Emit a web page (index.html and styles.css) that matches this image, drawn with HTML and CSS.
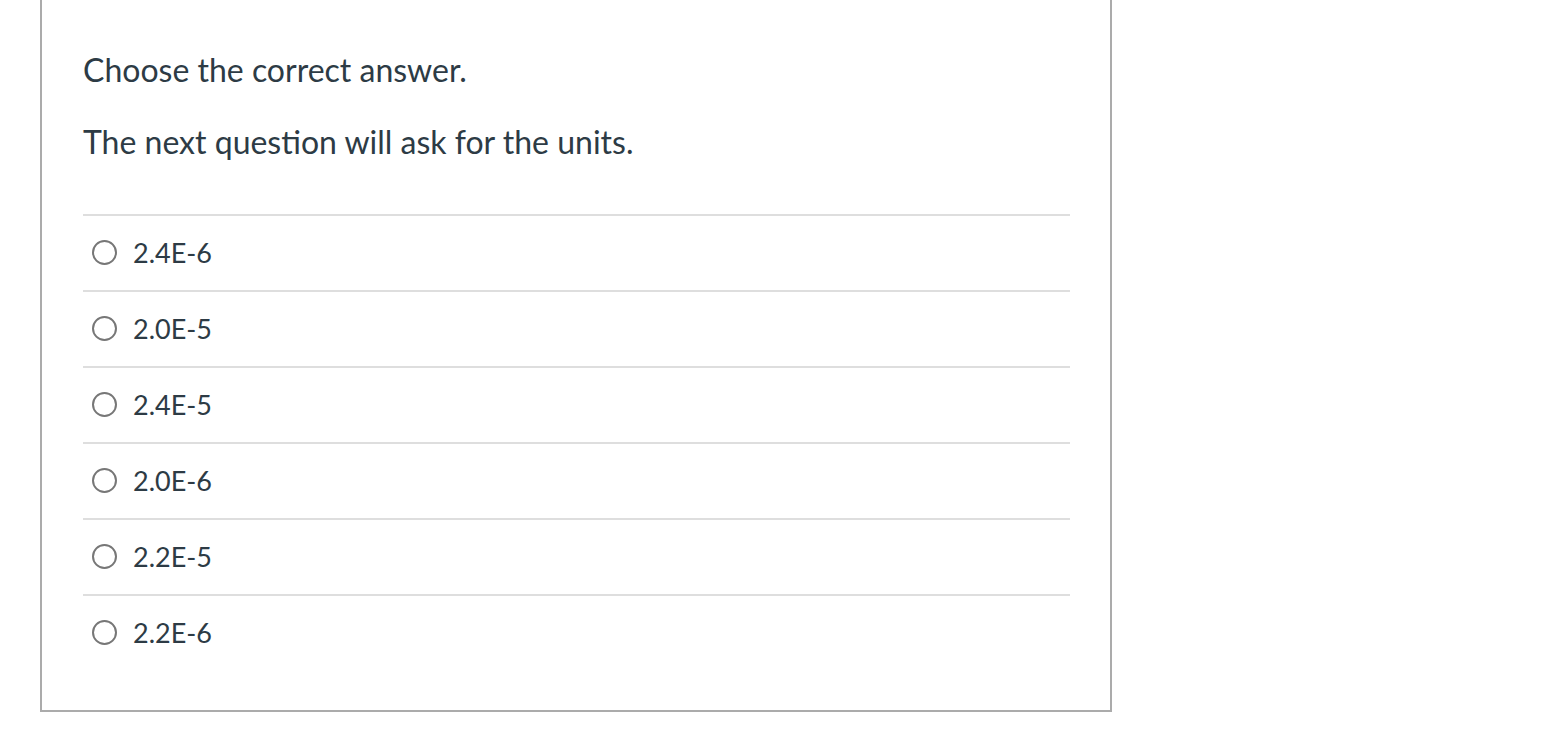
FILE: index.html
```html
<!DOCTYPE html>
<html>
<head>
<meta charset="utf-8">
<link rel="stylesheet" href="styles.css">
</head>
<body>
<div class="quiz">
  <div class="question">
    <p class="q-line">Choose the correct answer.</p>
    <p class="q-line">The next question will ask for the units.</p>
  </div>
  <div class="answers">
    <label class="answer"><span class="radio"></span><span class="a-text">2.4E-6</span></label>
    <label class="answer"><span class="radio"></span><span class="a-text">2.0E-5</span></label>
    <label class="answer"><span class="radio"></span><span class="a-text">2.4E-5</span></label>
    <label class="answer"><span class="radio"></span><span class="a-text">2.0E-6</span></label>
    <label class="answer"><span class="radio"></span><span class="a-text">2.2E-5</span></label>
    <label class="answer"><span class="radio"></span><span class="a-text">2.2E-6</span></label>
  </div>
</div>
</body>
</html>
```
FILE: styles.css
```css
html, body {
  margin: 0;
  padding: 0;
  background: #fff;
}
body {
  font-family: Lato, "Open Sans", sans-serif;
  color: #2d3b45;
}
.quiz {
  box-sizing: border-box;
  width: 1072px;
  margin: -20px 0 0 40px;
  border: 2px solid #ababab;
  padding: 20px 40px 40px 41px;
  background: #fff;
}
.question {
  padding-top: 48px;
  padding-bottom: 52px;
}
.q-line {
  margin: 0;
  font-size: 32px;
  line-height: 40px;
}
.q-line + .q-line {
  margin-top: 32px;
}
.answers {
  display: flex;
  flex-direction: column;
}
.answer {
  display: flex;
  align-items: center;
  gap: 16px;
  height: 76px;
  box-sizing: border-box;
  border-top: 2px solid #dedede;
  padding-left: 9px;
  padding-bottom: 2px;
  font-size: 27px;
}
.radio {
  width: 25px;
  height: 25px;
  border: 2px solid #777;
  border-radius: 50%;
  box-sizing: border-box;
  flex: none;
}
```
